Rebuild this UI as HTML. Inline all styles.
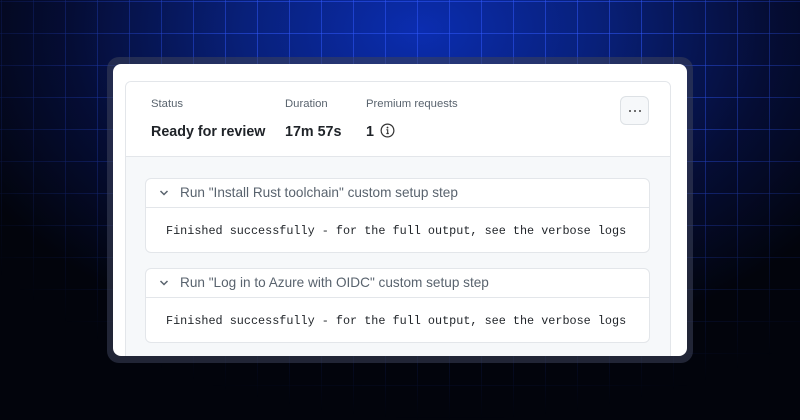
<!DOCTYPE html>
<html><head><style>
*{margin:0;padding:0;box-sizing:border-box}
body{width:800px;height:420px;overflow:hidden;position:relative;font-family:"Liberation Sans",sans-serif;
background:radial-gradient(ellipse 500px 330px at 420px 30px,#0b2db0 0%,#08207a 35%,#050d35 70%,#02040c 100%);}
.grid{position:absolute;inset:0;
background-image:linear-gradient(to right,rgba(50,90,255,.5) 1px,transparent 1px),linear-gradient(to bottom,rgba(50,90,255,.5) 1px,transparent 1px);
background-size:32px 32px;background-position:1px 1px;
-webkit-mask-image:radial-gradient(ellipse 560px 360px at 450px 60px,#000 35%,rgba(0,0,0,.3) 75%,transparent 100%);}
.frame{position:absolute;left:107px;top:57px;width:586px;height:306px;border-radius:12px;background:rgba(60,66,90,.55);}
.card{position:absolute;left:113px;top:64px;width:574px;height:292px;border-radius:8px;background:#fff;overflow:hidden}
.box{position:absolute;left:12px;top:17px;width:546px;height:300px;border:1px solid #e3e6ea;border-radius:6px;overflow:hidden;background:#f6f8fa}
.head{height:75px;background:#fff;border-bottom:1px solid #e3e6ea;position:relative}
.lbl{position:absolute;top:16px;font-size:11.3px;color:#59636e}
.val{position:absolute;top:42px;font-size:14.3px;color:#1f2328;font-weight:600}
.btn{position:absolute;left:494px;top:14px;width:29px;height:29px;border:1px solid #dde1e5;border-radius:6px;background:#f6f8fa}
.btn i{position:absolute;top:13px;width:2.4px;height:2.4px;border-radius:50%;background:#444}
.step{position:absolute;left:19px;width:505px;height:75px;border:1px solid #e3e6ea;border-radius:6px;background:#fff;overflow:hidden}
.sh{height:29px;border-bottom:1px solid #e3e6ea;font-size:13.6px;color:#59636e;line-height:28px;padding-left:34px;position:relative}
.sh svg{position:absolute;left:13px;top:10px}
.sb{font-family:"Liberation Mono",monospace;font-size:11.8px;color:#1f2328;padding-left:20px;line-height:46px}
</style></head><body>
<div class="grid"></div>
<div class="frame"></div>
<div class="card"><div class="box">
<div class="head">
<div class="lbl" style="left:25px">Status</div>
<div class="lbl" style="left:159px">Duration</div>
<div class="lbl" style="left:240px">Premium requests</div>
<div class="val" style="left:25px">Ready for review</div>
<div class="val" style="left:159px">17m 57s</div>
<div class="val" style="left:240px">1</div>
<svg style="position:absolute;left:254px;top:41px" width="15" height="15" viewBox="0 0 16 16"><circle cx="8" cy="8" r="6.8" fill="none" stroke="#333" stroke-width="1.3"/><circle cx="8" cy="4.8" r="1" fill="#333"/><path d="M6.8 7.2H8.2V11.2M6.8 11.2H9.4" stroke="#333" stroke-width="1.2" fill="none"/></svg>
<div class="btn"><i style="left:8px"></i><i style="left:13px"></i><i style="left:18px"></i></div>
</div>
<div class="step" style="top:96px"><div class="sh"><svg width="10" height="8" viewBox="0 0 10 8"><path d="M1.5 2L5 5.5 8.5 2" stroke="#59636e" stroke-width="1.5" fill="none"/></svg>Run "Install Rust toolchain" custom setup step</div><div class="sb">Finished successfully - for the full output, see the verbose logs</div></div>
<div class="step" style="top:186px"><div class="sh"><svg width="10" height="8" viewBox="0 0 10 8"><path d="M1.5 2L5 5.5 8.5 2" stroke="#59636e" stroke-width="1.5" fill="none"/></svg>Run "Log in to Azure with OIDC" custom setup step</div><div class="sb">Finished successfully - for the full output, see the verbose logs</div></div>
</div></div>
</body></html>
